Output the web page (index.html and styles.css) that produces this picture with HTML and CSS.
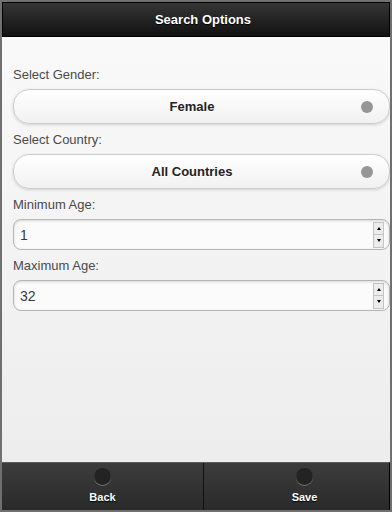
FILE: index.html
```html
<!DOCTYPE html>
<html lang="en">
<head>
  <meta charset="UTF-8">
  <meta name="viewport" content="width=device-width, initial-scale=1.0">
  <title>Search Options</title>
  <link rel="stylesheet" href="styles.css">
</head>
<body>
  <div class="screen">
    <header class="header-bar">
      <h1>Search Options</h1>
    </header>

    <main class="content">
      <label class="field-label">Select Gender:</label>
      <div class="select-btn">
        <span class="select-text">Female</span>
        <span class="select-dot"></span>
      </div>

      <label class="field-label">Select Country:</label>
      <div class="select-btn">
        <span class="select-text">All Countries</span>
        <span class="select-dot"></span>
      </div>

      <label class="field-label" for="minAge">Minimum Age:</label>
      <div class="number-box">
        <input type="text" id="minAge" value="1">
        <span class="spinner">
          <span class="spin spin-up"></span>
          <span class="spin spin-down"></span>
        </span>
      </div>

      <label class="field-label" for="maxAge">Maximum Age:</label>
      <div class="number-box">
        <input type="text" id="maxAge" value="32">
        <span class="spinner">
          <span class="spin spin-up"></span>
          <span class="spin spin-down"></span>
        </span>
      </div>
    </main>

    <footer class="nav-bar">
      <a class="nav-item nav-back" href="#">
        <span class="nav-icon"></span>
        <span class="nav-text">Back</span>
      </a>
      <a class="nav-item nav-save" href="#">
        <span class="nav-icon"></span>
        <span class="nav-text">Save</span>
      </a>
    </footer>
  </div>
</body>
</html>
```

FILE: styles.css
```css
* {
  box-sizing: border-box;
}
body {
  margin: 0;
  background-color: #707070;
  font-family: "Liberation Sans", Arial, sans-serif;
}
.screen {
  width: 392px;
  height: 512px;
  border: 2px solid #707070;
  display: flex;
  flex-direction: column;
  overflow: hidden;
}
.header-bar {
  height: 35px;
  border: 1px solid #000;
  background: linear-gradient(#363636, #111111);
  display: flex;
  align-items: center;
  justify-content: center;
  padding-left: 14px;
}
.header-bar h1 {
  margin: 0;
  color: #fff;
  font-size: 13px;
  font-weight: bold;
  text-shadow: 0 1px 1px #000;
}
.content {
  flex: 1;
  display: flex;
  flex-direction: column;
  padding: 22px 0 0 11px;
  background: linear-gradient(#f9f9f9, #ededed);
}
.field-label {
  display: block;
  margin: 8px 0 6px;
  font-size: 13px;
  line-height: 16px;
  color: #4a4a4a;
}
.select-btn {
  height: 35px;
  display: flex;
  align-items: center;
  padding: 0 16px 0 15px;
  border: 1px solid #cccccc;
  border-radius: 16px;
  background: linear-gradient(#ffffff, #f1f1f1);
  box-shadow: 0 1px 3px rgba(0, 0, 0, 0.15);
}
.select-text {
  flex: 1;
  padding-right: 6px;
  text-align: center;
  font-size: 13px;
  font-weight: bold;
  color: #222;
  text-shadow: 0 1px 0 #fff;
}
.select-dot {
  width: 12px;
  height: 12px;
  border-radius: 50%;
  background-color: #969696;
}
.number-box {
  height: 31px;
  display: flex;
  align-items: center;
  border: 1px solid #b5b5b5;
  border-radius: 8px;
  background-color: #fbfbfb;
  box-shadow: inset 0 1px 3px rgba(0, 0, 0, 0.15);
  padding: 0 5px 0 6px;
}
.number-box input {
  flex: 1;
  min-width: 0;
  border: none;
  background: transparent;
  padding: 0;
  font-family: inherit;
  font-size: 14px;
  color: #3a3a3a;
  outline: none;
}
.spinner {
  width: 11px;
  display: flex;
  flex-direction: column;
}
.spin {
  height: 13px;
  border: 1px solid #c4c4c4;
  background-color: #ececec;
  display: flex;
  align-items: center;
  justify-content: center;
}
.spin-down {
  border-top: none;
}
.spin::after {
  content: "";
  border-left: 2px solid transparent;
  border-right: 2px solid transparent;
}
.spin-up::after {
  border-bottom: 3px solid #000;
}
.spin-down::after {
  border-top: 3px solid #000;
}
.nav-bar {
  height: 48px;
  display: flex;
  border-top: 1px solid #5c5c5c;
  border-right: 1px solid #000;
  background: linear-gradient(#3c3c3c, #2a2a2a);
}
.nav-item {
  flex: 1;
  display: flex;
  flex-direction: column;
  align-items: center;
  padding-top: 5px;
  text-decoration: none;
}
.nav-back {
  flex: 0 0 201px;
}
.nav-save {
  padding-left: 16px;
  border-left: 1px solid #111;
}
.nav-icon {
  width: 17px;
  height: 17px;
  border-radius: 50%;
  background-color: #232323;
  box-shadow: 0 1px 0 rgba(255, 255, 255, 0.3);
}
.nav-text {
  margin-top: 6px;
  color: #fff;
  font-size: 11px;
  font-weight: bold;
  text-shadow: 0 1px 1px #000;
}
```
